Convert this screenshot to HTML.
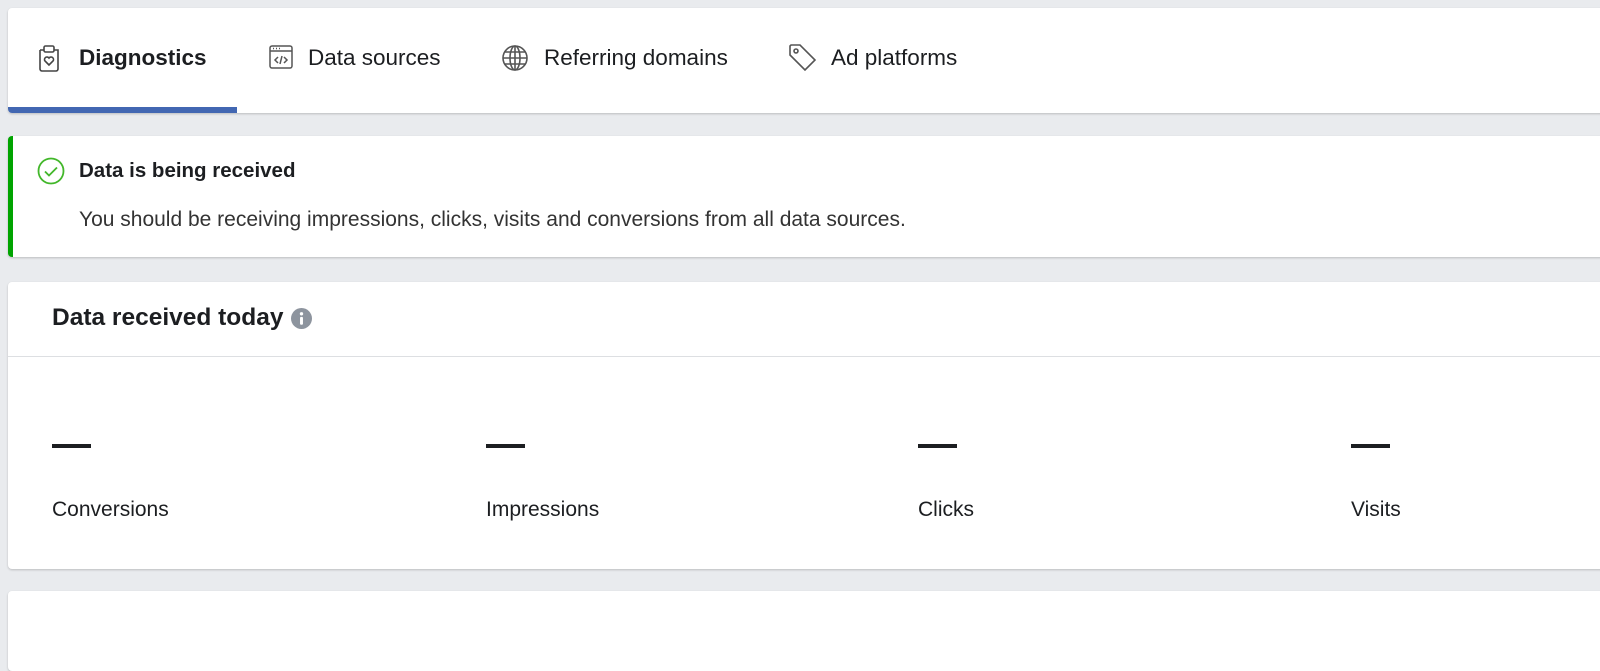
<!DOCTYPE html>
<html><head><style>
body{margin:0;width:1600px;height:626px;background:#e9ebee;font-family:"Liberation Sans",Arial,sans-serif;color:#1c1e21;overflow:hidden;position:relative}
.card{position:absolute;left:8px;width:1620px;background:#fff;border-radius:4px;box-shadow:0 1px 2px rgba(0,0,0,.2)}
.tab{position:absolute;top:8px;height:100px;display:flex;align-items:center;font-size:22.5px;color:#1c1e21}
.ic{position:absolute;top:44px}
.dash{position:absolute;top:444px;width:39px;height:4px;background:#1c1e21}
.lbl{position:absolute;top:498px;font-size:21px;color:#1c1e21;line-height:24px}
</style></head><body>
<div class="card" style="top:8px;height:105px"></div>
<div style="position:absolute;left:8px;top:107px;width:229px;height:6px;background:#4267b2;border-radius:0 0 0 4px"></div>
<svg class="ic" style="left:36px" width="26" height="28" viewBox="0 0 26 28" fill="none" stroke="#444" stroke-width="1.6"><path d="M4 6h4M18 6h4v19a2 2 0 0 1-2 2H6a2 2 0 0 1-2-2V6"/><rect x="8" y="2" width="10" height="6" rx="1.5"/><path d="M13 21l-4-4a2 2 0 0 1 4-3 2 2 0 0 1 4 3z"/></svg>
<div class="tab" style="left:79px;font-weight:bold">Diagnostics</div>
<svg class="ic" style="left:268px" width="26" height="26" viewBox="0 0 26 26" fill="none" stroke="#555" stroke-width="1.5"><rect x="2" y="2" width="22" height="22" rx="2"/><path d="M2 7h22M5 4.5h1M8 4.5h1M11 4.5h1M10 13l-3 3 3 3M16 13l3 3-3 3M14 12l-2 8"/></svg>
<div class="tab" style="left:308px">Data sources</div>
<svg class="ic" style="left:501px" width="28" height="28" viewBox="0 0 28 28" fill="none" stroke="#555" stroke-width="1.6"><circle cx="14" cy="14" r="12"/><ellipse cx="14" cy="14" rx="5" ry="12"/><path d="M2 14h24M4 8h20M4 20h20M14 2v24"/></svg>
<div class="tab" style="left:544px">Referring domains</div>
<svg class="ic" style="left:787px;top:42px" width="30" height="30" viewBox="0 0 30 30" fill="none" stroke="#555" stroke-width="1.6"><path d="M3 4v9l15 15 10-10L13 3H4z"/><circle cx="9" cy="9" r="2"/></svg>
<div class="tab" style="left:831px">Ad platforms</div>

<div class="card" style="top:136px;height:121px;border-left:5px solid #00a400"></div>
<svg style="position:absolute;left:37px;top:157px" width="28" height="28" viewBox="0 0 28 28" fill="none" stroke="#42b72a" stroke-width="1.8"><circle cx="14" cy="14" r="12.5"/><path d="M8 14.5l4 4 8-8"/></svg>
<div style="position:absolute;left:79px;top:159px;font-size:20.5px;line-height:24px;font-weight:bold">Data is being received</div>
<div style="position:absolute;left:79px;top:208px;font-size:21px;line-height:24px;color:#333">You should be receiving impressions, clicks, visits and conversions from all data sources.</div>

<div class="card" style="top:282px;height:287px"></div>
<div style="position:absolute;left:8px;top:356px;width:1600px;height:1px;background:#dddfe2"></div>
<div style="position:absolute;left:52px;top:304px;font-size:24.5px;line-height:28px;font-weight:bold">Data received today</div>
<svg style="position:absolute;left:291px;top:308px" width="21" height="21" viewBox="0 0 20 20"><circle cx="10" cy="10" r="10" fill="#8d949e"/><circle cx="10" cy="5.5" r="1.6" fill="#fff"/><rect x="8.6" y="8.5" width="2.8" height="7.5" rx="1" fill="#fff"/></svg>
<div class="dash" style="left:52px"></div><div class="dash" style="left:486px"></div><div class="dash" style="left:918px"></div><div class="dash" style="left:1351px"></div>
<div class="lbl" style="left:52px">Conversions</div><div class="lbl" style="left:486px">Impressions</div><div class="lbl" style="left:918px">Clicks</div><div class="lbl" style="left:1351px">Visits</div>

<div class="card" style="top:591px;height:80px"></div>
</body></html>
